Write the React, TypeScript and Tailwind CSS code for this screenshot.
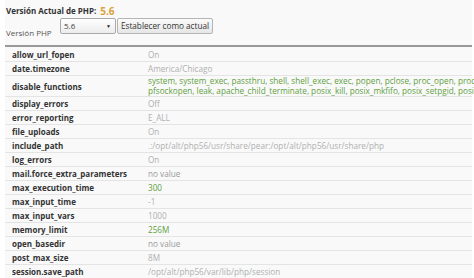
import React from "react";

type Row = { k: string; v: string; c?: "gray" | "green" | "dark" };

const rows1: Row[] = [
  { k: "allow_url_fopen", v: "On" },
  { k: "date.timezone", v: "America/Chicago" },
];

const rows2: Row[] = [
  { k: "display_errors", v: "Off" },
  { k: "error_reporting", v: "E_ALL" },
  { k: "file_uploads", v: "On" },
  { k: "include_path", v: ".:/opt/alt/php56/usr/share/pear:/opt/alt/php56/usr/share/php" },
  { k: "log_errors", v: "On" },
  { k: "mail.force_extra_parameters", v: "no value", c: "dark" },
  { k: "max_execution_time", v: "300", c: "green" },
  { k: "max_input_time", v: "-1" },
  { k: "max_input_vars", v: "1000" },
  { k: "memory_limit", v: "256M", c: "green" },
  { k: "open_basedir", v: "no value", c: "dark" },
  { k: "post_max_size", v: "8M" },
  { k: "session.save_path", v: "/opt/alt/php56/var/lib/php/session" },
];

function Line({ r }: { r: Row }) {
  const color =
    r.c === "green" ? "text-[#5f9f42]" : r.c === "dark" ? "text-[#999]" : "text-[#b0b0b0]";
  return (
    <div className="flex h-[14px] items-center border-b border-[#e4e4e4]">
      <div className="w-[141px] shrink-0 pl-[7px] text-[8px] font-bold leading-[13px] text-[#333]">
        {r.k}
      </div>
      <div className={`whitespace-nowrap pl-[2px] text-[8.2px] leading-[13px] ${color}`}>{r.v}</div>
    </div>
  );
}

export default function App() {
  return (
    <div className="h-[278px] w-[474px] overflow-hidden bg-white font-['Open_Sans',sans-serif]">
      <div className="ml-[5px] w-[467px] bg-[#f9f9f9]">
        <div className="flex h-[18px] items-center pl-[1px] pt-[4px]">
          <span className="text-[8px] font-bold leading-[14px] text-[#333]">Versión Actual de PHP:</span>
          <span className="ml-[4px] text-[10px] font-bold leading-[14px] text-[#dba23a]">5.6</span>
        </div>
        <div className="flex h-[27px] items-start pl-[1px]">
          <div className="w-[54px] shrink-0 pt-[10px] text-[8px] leading-[10px] text-[#555]">Versión PHP</div>
          <div className="flex h-[16px] w-[56px] items-center justify-between rounded-[2px] border border-[#aaa] bg-gradient-to-b from-white to-[#ececec] pl-[3px] pr-[4px]">
            <span className="text-[8px] leading-[10px] text-[#444]">5.6</span>
            <span className="text-[5px] leading-[6px] text-[#222]">▼</span>
          </div>
          <div className="ml-[1px] flex h-[16px] w-[96px] items-center justify-center rounded-[2px] border border-[#b5b5b5] bg-gradient-to-b from-[#fbfbfb] to-[#e6e6e6] text-[8.2px] leading-[10px] text-[#333]">
            Establecer como actual
          </div>
        </div>
        <div className="border-t-2 border-[#999]" />
        <div className="mt-[1px]">
          {rows1.map((r) => (
            <Line key={r.k} r={r} />
          ))}
          <div className="flex h-[21px] items-center border-b border-[#e4e4e4]">
            <div className="w-[141px] shrink-0 pl-[7px] text-[8px] font-bold leading-[13px] text-[#333]">
              disable_functions
            </div>
            <div className="whitespace-nowrap pl-[2px] text-[8.2px] leading-[10px] text-[#5f9f42]">
              system, system_exec, passthru, shell, shell_exec, exec, popen, pclose, proc_open, proc_nice, proc_terminate, proc_get_status, proc_close,
              <br />
              pfsockopen, leak, apache_child_terminate, posix_kill, posix_mkfifo, posix_setpgid, posix_setsid, posix_setuid
            </div>
          </div>
          {rows2.map((r) => (
            <Line key={r.k} r={r} />
          ))}
        </div>
      </div>
    </div>
  );
}
